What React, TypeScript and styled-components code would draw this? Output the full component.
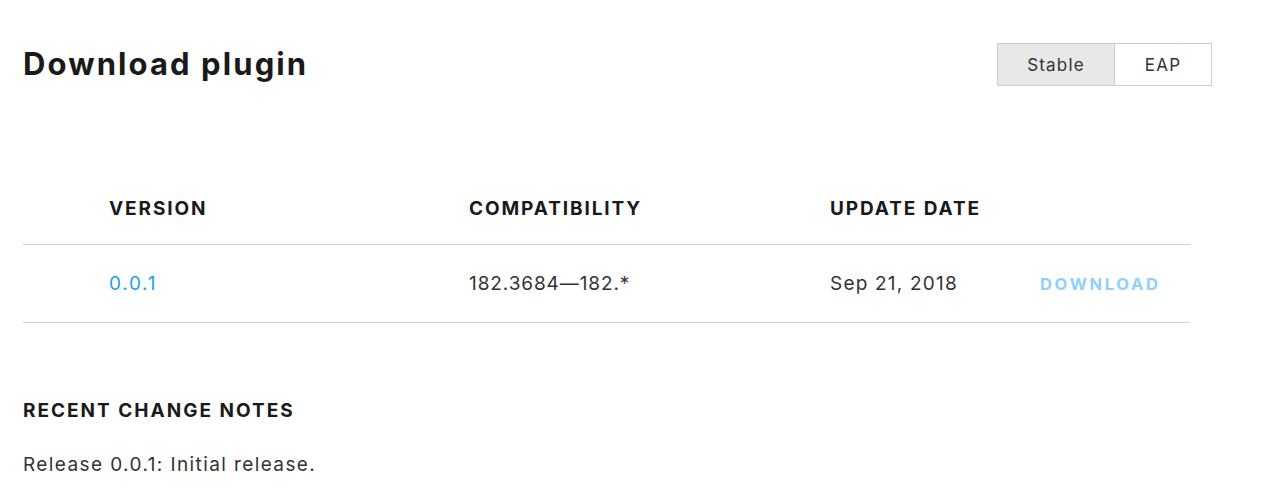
import styled, { createGlobalStyle } from 'styled-components';

const GlobalStyle = createGlobalStyle`
body{
    margin: 0;
    background: #fff;
    font-family: Inter, "Noto Sans", sans-serif;
    color: #1c1c1c;
}
`;

const Page = styled.div`
width: 1274px;
padding: 43px 0 0 23px;
box-sizing: border-box;
`;

const TopBar = styled.div`
display: flex;
align-items: center;
justify-content: space-between;
width: 1189px;
`;

const Title = styled.h1`
margin: 0 0 2px;
font-size: 31px;
font-weight: 700;
letter-spacing: 2.1px;
color: #1a1a1a;
line-height: 40px;
`;

const Toggle = styled.div`
display: flex;
border: 1px solid #cccccc;
height: 41px;
`;

const ToggleButton = styled.div<{ $active?: boolean; $width: number }>`
display: flex;
align-items: center;
justify-content: center;
width: ${p => p.$width}px;
background: ${p => (p.$active ? '#e8e8e8' : '#fff')};
border-left: ${p => (p.$active ? 'none' : '1px solid #cccccc')};
font-size: 17px;
color: #333;
letter-spacing: 1.2px;
`;

const Table = styled.div`
margin-top: 86px;
width: 1167px;
`;

const Row = styled.div<{ $height: number }>`
display: grid;
grid-template-columns: 86px 360px 361px 210px 1fr;
align-items: center;
height: ${p => p.$height}px;
border-bottom: 1px solid #cfcfcf;
`;

const HeadCell = styled.div`
font-size: 19px;
font-weight: 700;
letter-spacing: 1.9px;
color: #1a1a1a;
`;

const Cell = styled.div<{ $spacing?: number }>`
font-size: 19px;
color: #333;
letter-spacing: ${p => p.$spacing ?? 1}px;
`;

const VersionLink = styled.a`
font-size: 19px;
color: #1fa1f2;
text-decoration: none;
letter-spacing: 1.7px;
`;

const DownloadLink = styled.a`
font-size: 16.5px;
font-weight: 700;
color: #8fd0fc;
letter-spacing: 2.7px;
text-decoration: none;
`;

const NotesTitle = styled.h2`
margin: 77px 0 0;
font-size: 19px;
font-weight: 700;
letter-spacing: 2px;
color: #1a1a1a;
line-height: 22px;
`;

const NotesText = styled.p`
margin: 32px 0 0;
font-size: 19px;
color: #333;
letter-spacing: 1.4px;
line-height: 22px;
`;

export default function App() {
    return (
        <Page>
            <GlobalStyle />
            <TopBar>
                <Title>Download plugin</Title>
                <Toggle>
                    <ToggleButton $active $width={116}>Stable</ToggleButton>
                    <ToggleButton $width={96}>EAP</ToggleButton>
                </Toggle>
            </TopBar>
            <Table>
                <Row $height={72}>
                    <span />
                    <HeadCell>VERSION</HeadCell>
                    <HeadCell>COMPATIBILITY</HeadCell>
                    <HeadCell>UPDATE DATE</HeadCell>
                    <span />
                </Row>
                <Row $height={77}>
                    <span />
                    <Cell><VersionLink href="#">0.0.1</VersionLink></Cell>
                    <Cell $spacing={0.9}>182.3684—182.*</Cell>
                    <Cell $spacing={1.2}>Sep 21, 2018</Cell>
                    <Cell><DownloadLink href="#">DOWNLOAD</DownloadLink></Cell>
                </Row>
            </Table>
            <NotesTitle>RECENT CHANGE NOTES</NotesTitle>
            <NotesText>Release 0.0.1: Initial release.</NotesText>
        </Page>
    );
}
